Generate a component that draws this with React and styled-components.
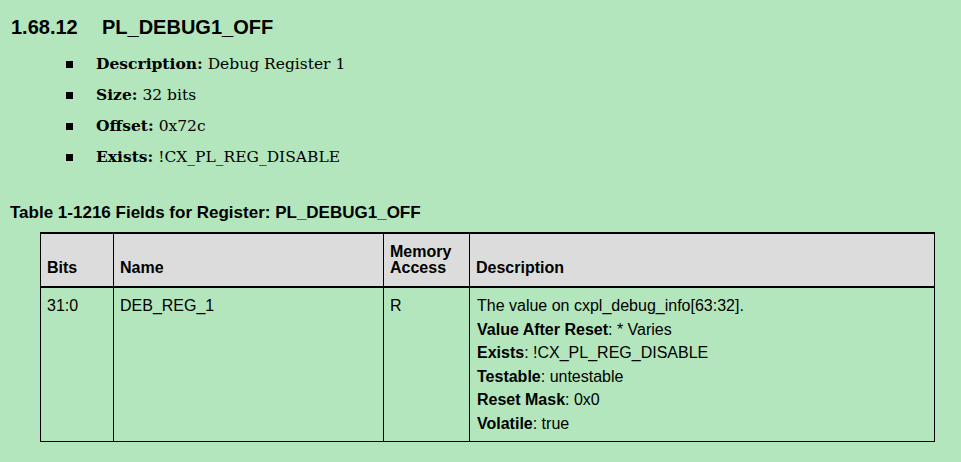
import React from 'react';
import styled, { createGlobalStyle } from 'styled-components';

const GlobalStyle = createGlobalStyle`
  *, *::before, *::after {
    box-sizing: border-box;
  }
  html, body {
    margin: 0;
    background: #b3e6bc;
    color: #000;
  }
`;

const Page = styled.div`
  min-height: 462px;
  padding: 15px 10px 20px;
  background: #b3e6bc;
  font-family: 'Liberation Sans', Arial, sans-serif;
`;

const Heading = styled.h2`
  display: flex;
  margin: 0;
  font-size: 20px;
  line-height: 24px;
  font-weight: 700;
`;

const SectionNumber = styled.span`
  width: 91px;
  margin-left: 1px;
`;

const PropertyList = styled.ul`
  list-style: none;
  margin: 9px 0 0;
  padding: 0 0 0 56px;
  font-family: 'DejaVu Serif', 'Liberation Serif', serif;
  font-size: 15.5px;

  li {
    display: flex;
    align-items: center;
    height: 31px;
    line-height: 20px;
  }

  li::before {
    content: '';
    flex: none;
    width: 7px;
    height: 7px;
    margin: 1px 23px 0 0;
    background: #000;
  }
`;

const Caption = styled.div`
  margin-top: 31px;
  font-size: 17px;
  line-height: 20px;
  font-weight: 700;
`;

const FieldTable = styled.table`
  width: 895px;
  margin: 9px 0 0 30px;
  table-layout: fixed;
  border-collapse: separate;
  border-spacing: 0;
  border-left: 1px solid #000;
  border-top: 2px solid #000;
  font-size: 16px;
`;

const HeadCell = styled.th`
  width: ${({ $w }) => $w}px;
  padding: 9.5px 6px 10px;
  background: #dcdcdc;
  border-right: 1px solid #000;
  border-bottom: 2px solid #000;
  text-align: left;
  vertical-align: bottom;
  font-weight: 700;
  line-height: 16px;
`;

const Cell = styled.td`
  padding: 6.5px ${({ $pad }) => $pad || 6}px 6px;
  border-right: 1px solid #000;
  border-bottom: 1px solid #000;
  vertical-align: top;
  line-height: 23.5px;
`;

const Label = styled.b`
  font-weight: 700;
`;

const properties = [
  ['Description:', 'Debug Register 1'],
  ['Size:', '32 bits'],
  ['Offset:', '0x72c'],
  ['Exists:', '!CX_PL_REG_DISABLE'],
];

const details = [
  ['Value After Reset', '* Varies'],
  ['Exists', '!CX_PL_REG_DISABLE'],
  ['Testable', 'untestable'],
  ['Reset Mask', '0x0'],
  ['Volatile', 'true'],
];

const App = () => (
  <>
    <GlobalStyle />
    <Page>
      <Heading>
        <SectionNumber>1.68.12</SectionNumber>
        PL_DEBUG1_OFF
      </Heading>
      <PropertyList>
        {properties.map(([label, value]) => (
          <li key={label}>
            <span>
              <Label>{label}</Label> {value}
            </span>
          </li>
        ))}
      </PropertyList>
      <Caption>Table 1-1216 Fields for Register: PL_DEBUG1_OFF</Caption>
      <FieldTable>
        <thead>
          <tr>
            <HeadCell $w={73}>Bits</HeadCell>
            <HeadCell $w={270}>Name</HeadCell>
            <HeadCell $w={86}>
              Memory
              <br />
              Access
            </HeadCell>
            <HeadCell $w={465}>Description</HeadCell>
          </tr>
        </thead>
        <tbody>
          <tr>
            <Cell>31:0</Cell>
            <Cell>DEB_REG_1</Cell>
            <Cell>R</Cell>
            <Cell $pad={7}>
              <div>The value on cxpl_debug_info[63:32].</div>
              {details.map(([label, value]) => (
                <div key={label}>
                  <Label>{label}</Label>: {value}
                </div>
              ))}
            </Cell>
          </tr>
        </tbody>
      </FieldTable>
    </Page>
  </>
);

export default App;
